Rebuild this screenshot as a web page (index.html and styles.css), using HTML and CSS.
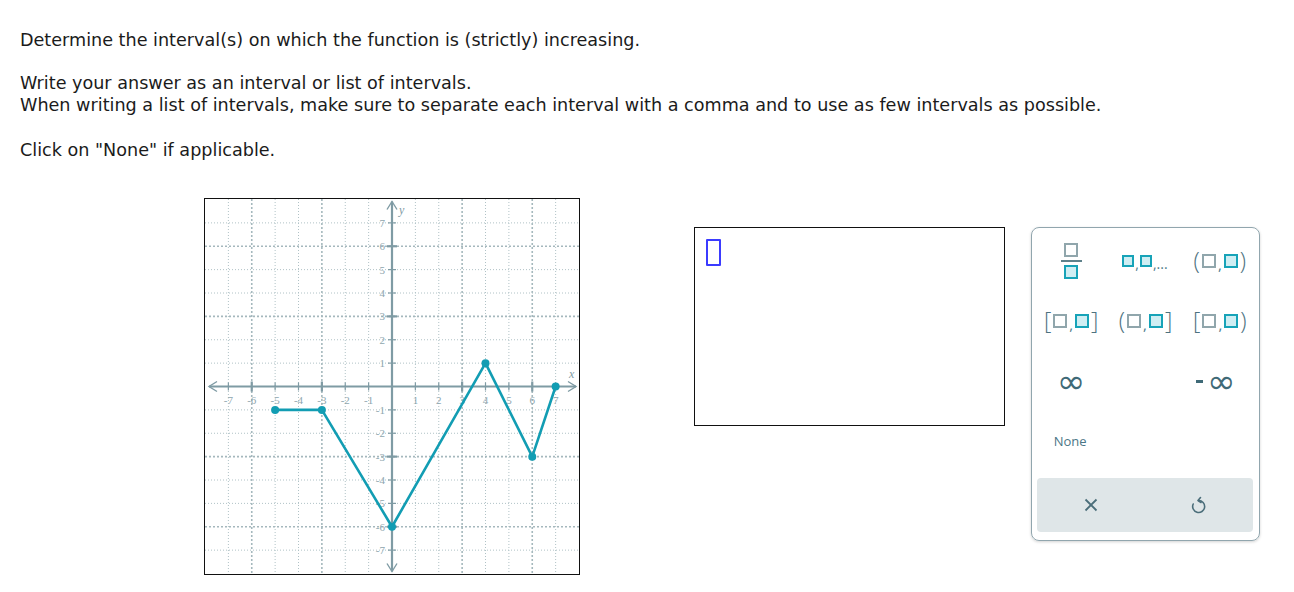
FILE: index.html
```html
<!DOCTYPE html>
<html>
<head>
<meta charset="utf-8">
<link rel="stylesheet" href="styles.css">
</head>
<body>
<div class="page">
  <p class="p1">Determine the interval(s) on which the function is (strictly) increasing.</p>
  <p class="p2">Write your answer as an interval or list of intervals.<br>When writing a list of intervals, make sure to separate each interval with a comma and to use as few intervals as possible.</p>
  <p class="p3">Click on "None" if applicable.</p>

  <div class="work">
    <div class="graph">
      <svg width="374" height="375" viewBox="0 0 374 375">
        <g transform="translate(187 187.5)">
          <g class="grid">
            <line x1="-163.625" y1="-187.5" x2="-163.625" y2="187.5"/>
            <line class="g3" x1="-140.25" y1="-187.5" x2="-140.25" y2="187.5"/>
            <line x1="-116.875" y1="-187.5" x2="-116.875" y2="187.5"/>
            <line x1="-93.5" y1="-187.5" x2="-93.5" y2="187.5"/>
            <line class="g3" x1="-70.125" y1="-187.5" x2="-70.125" y2="187.5"/>
            <line x1="-46.75" y1="-187.5" x2="-46.75" y2="187.5"/>
            <line x1="-23.375" y1="-187.5" x2="-23.375" y2="187.5"/>
            <line x1="23.375" y1="-187.5" x2="23.375" y2="187.5"/>
            <line x1="46.75" y1="-187.5" x2="46.75" y2="187.5"/>
            <line class="g3" x1="70.125" y1="-187.5" x2="70.125" y2="187.5"/>
            <line x1="93.5" y1="-187.5" x2="93.5" y2="187.5"/>
            <line x1="116.875" y1="-187.5" x2="116.875" y2="187.5"/>
            <line class="g3" x1="140.25" y1="-187.5" x2="140.25" y2="187.5"/>
            <line x1="163.625" y1="-187.5" x2="163.625" y2="187.5"/>

            <line y1="-163.625" x1="-187" y2="-163.625" x2="187"/>
            <line class="g3" y1="-140.25" x1="-187" y2="-140.25" x2="187"/>
            <line y1="-116.875" x1="-187" y2="-116.875" x2="187"/>
            <line y1="-93.5" x1="-187" y2="-93.5" x2="187"/>
            <line class="g3" y1="-70.125" x1="-187" y2="-70.125" x2="187"/>
            <line y1="-46.75" x1="-187" y2="-46.75" x2="187"/>
            <line y1="-23.375" x1="-187" y2="-23.375" x2="187"/>
            <line y1="23.375" x1="-187" y2="23.375" x2="187"/>
            <line y1="46.75" x1="-187" y2="46.75" x2="187"/>
            <line class="g3" y1="70.125" x1="-187" y2="70.125" x2="187"/>
            <line y1="93.5" x1="-187" y2="93.5" x2="187"/>
            <line y1="116.875" x1="-187" y2="116.875" x2="187"/>
            <line class="g3" y1="140.25" x1="-187" y2="140.25" x2="187"/>
            <line y1="163.625" x1="-187" y2="163.625" x2="187"/>
          </g>

          <g class="labels">
            <text x="-163.625" y="17">-7</text>
            <text x="-140.25" y="17">-6</text>
            <text x="-116.875" y="17">-5</text>
            <text x="-93.5" y="17">-4</text>
            <text x="-70.125" y="17">-3</text>
            <text x="-46.75" y="17">-2</text>
            <text x="-23.375" y="17">-1</text>
            <text x="23.375" y="17">1</text>
            <text x="46.75" y="17">2</text>
            <text x="70.125" y="17">3</text>
            <text x="93.5" y="17">4</text>
            <text x="116.875" y="17">5</text>
            <text x="140.25" y="17">6</text>
            <text x="163.625" y="17">7</text>
          </g>
          <g class="labels ylab">
            <text x="-7" y="-159.6">7</text>
            <text x="-7" y="-136.25">6</text>
            <text x="-7" y="-112.9">5</text>
            <text x="-7" y="-89.5">4</text>
            <text x="-7" y="-66.1">3</text>
            <text x="-7" y="-42.75">2</text>
            <text x="-7" y="-19.4">1</text>
            <text x="-7" y="27.4">-1</text>
            <text x="-7" y="50.75">-2</text>
            <text x="-7" y="74.1">-3</text>
            <text x="-7" y="97.5">-4</text>
            <text x="-7" y="120.9">-5</text>
            <text x="-7" y="144.25">-6</text>
            <text x="-7" y="167.6">-7</text>
          </g>

          <g class="axis">
            <line x1="-183" y1="0" x2="184" y2="0"/>
            <line x1="0" y1="-185" x2="0" y2="185"/>
            <polyline points="-175,-5 -183,0 -175,5"/>
            <polyline points="176,-5 184,0 176,5"/>
            <polyline points="-5,-177 0,-185 5,-177"/>
            <polyline points="-5,177 0,185 5,177"/>
          </g>
          <g class="ticks">
            <line x1="-163.625" y1="-4" x2="-163.625" y2="4"/>
            <line class="t3" x1="-140.25" y1="-5" x2="-140.25" y2="5"/>
            <line x1="-116.875" y1="-4" x2="-116.875" y2="4"/>
            <line x1="-93.5" y1="-4" x2="-93.5" y2="4"/>
            <line class="t3" x1="-70.125" y1="-5" x2="-70.125" y2="5"/>
            <line x1="-46.75" y1="-4" x2="-46.75" y2="4"/>
            <line x1="-23.375" y1="-4" x2="-23.375" y2="4"/>
            <line x1="23.375" y1="-4" x2="23.375" y2="4"/>
            <line x1="46.75" y1="-4" x2="46.75" y2="4"/>
            <line class="t3" x1="70.125" y1="-5" x2="70.125" y2="5"/>
            <line x1="93.5" y1="-4" x2="93.5" y2="4"/>
            <line x1="116.875" y1="-4" x2="116.875" y2="4"/>
            <line class="t3" x1="140.25" y1="-5" x2="140.25" y2="5"/>
            <line x1="163.625" y1="-4" x2="163.625" y2="4"/>

            <line y1="-163.625" x1="-4" y2="-163.625" x2="4"/>
            <line class="t3" y1="-140.25" x1="-5" y2="-140.25" x2="5"/>
            <line y1="-116.875" x1="-4" y2="-116.875" x2="4"/>
            <line y1="-93.5" x1="-4" y2="-93.5" x2="4"/>
            <line class="t3" y1="-70.125" x1="-5" y2="-70.125" x2="5"/>
            <line y1="-46.75" x1="-4" y2="-46.75" x2="4"/>
            <line y1="-23.375" x1="-4" y2="-23.375" x2="4"/>
            <line y1="23.375" x1="-4" y2="23.375" x2="4"/>
            <line y1="46.75" x1="-4" y2="46.75" x2="4"/>
            <line class="t3" y1="70.125" x1="-5" y2="70.125" x2="5"/>
            <line y1="93.5" x1="-4" y2="93.5" x2="4"/>
            <line y1="116.875" x1="-4" y2="116.875" x2="4"/>
            <line class="t3" y1="140.25" x1="-5" y2="140.25" x2="5"/>
            <line y1="163.625" x1="-4" y2="163.625" x2="4"/>
          </g>
          <text class="axname" x="177" y="-9">x</text>
          <text class="axname" x="7" y="-173">y</text>

          <polyline class="fn" points="-116.875,23.375 -70.125,23.375 0,140.25 93.5,-23.375 140.25,70.125 163.625,0"/>
          <g class="dots">
            <circle cx="-116.875" cy="23.375" r="4"/>
            <circle cx="-70.125" cy="23.375" r="4"/>
            <circle cx="0" cy="140.25" r="4"/>
            <circle cx="93.5" cy="-23.375" r="4"/>
            <circle cx="140.25" cy="70.125" r="4"/>
            <circle cx="163.625" cy="0" r="4"/>
          </g>
        </g>
      </svg>
    </div>

    <div class="answer">
      <span class="cursor"></span>
    </div>

    <div class="keypad">
      <div class="keys">
        <div class="key">
          <span class="frac"><span class="sq g"></span><span class="bar"></span><span class="sq t"></span></span>
        </div>
        <div class="key">
          <span class="list"><span class="sq t sm"></span><span class="cm">,</span><span class="sq t sm"></span><span class="cm">,...</span></span>
        </div>
        <div class="key">
          <span class="iv"><span class="br">(</span><span class="sq g"></span><span class="cm">,</span><span class="sq t"></span><span class="br">)</span></span>
        </div>
        <div class="key">
          <span class="iv"><span class="br">[</span><span class="sq g"></span><span class="cm">,</span><span class="sq t"></span><span class="br">]</span></span>
        </div>
        <div class="key">
          <span class="iv"><span class="br">(</span><span class="sq g"></span><span class="cm">,</span><span class="sq t"></span><span class="br">]</span></span>
        </div>
        <div class="key">
          <span class="iv"><span class="br">[</span><span class="sq g"></span><span class="cm">,</span><span class="sq t"></span><span class="br">)</span></span>
        </div>
        <div class="key"><span class="inf">∞</span></div>
        <div class="key"></div>
        <div class="key"><span class="inf ninf"><span class="minus"></span>∞</span></div>
        <div class="key"><span class="none">None</span></div>
      </div>
      <div class="actions">
        <div class="act">
          <svg width="14" height="14" viewBox="0 0 14 14"><path d="M1.5 1.5 L12.5 12.5 M12.5 1.5 L1.5 12.5" stroke="#4b6e7a" stroke-width="1.8" fill="none"/></svg>
        </div>
        <div class="act">
          <svg width="16" height="18" viewBox="0 0 16 18"><path d="M7.5 4.5 A6 6 0 1 1 2.2 8" stroke="#4b6e7a" stroke-width="1.6" fill="none" stroke-linecap="round"/><path d="M9.5 1.5 L7 4.5 L10 6.5" stroke="#4b6e7a" stroke-width="1.6" fill="none" stroke-linecap="round" stroke-linejoin="round"/></svg>
        </div>
      </div>
    </div>
  </div>
</div>
</body>
</html>
```

FILE: styles.css
```css
* { box-sizing: border-box; }
html, body { margin: 0; padding: 0; background: #fff; }
body {
  font-family: "DejaVu Sans", Verdana, sans-serif;
  font-size: 17.6px;
  color: #1b1b1b;
}
.page { padding: 29px 0 0 20px; }
p { margin: 0; line-height: 22px; }
.p2 { margin-top: 21px; }
.p3 { margin-top: 23px; }

.work {
  display: flex;
  align-items: flex-start;
  margin-top: 37px;
  margin-left: 184px;
}
.graph {
  width: 376px;
  height: 377px;
  border: 1px solid #111;
  background: #fff;
}
.graph svg { display: block; }
.grid line { stroke: #b0c2c6; stroke-width: 1; stroke-dasharray: 1 2; }
.grid line.g3 { stroke: #a5b8bd; stroke-width: 1.6; stroke-dasharray: 2 2; }
.labels text {
  font-family: "Liberation Serif", "DejaVu Serif", serif;
  font-size: 11px;
  fill: #8ea6ae;
  text-anchor: middle;
}
.ylab text { text-anchor: end; }
.axis line, .axis polyline { stroke: #7f9ba4; stroke-width: 2.2; fill: none; }
.axis polyline { stroke-width: 1.4; }
.ticks line { stroke: #7f9ba4; stroke-width: 1.2; }
.ticks line.t3 { stroke-width: 2.2; }
.axname {
  font-family: "Liberation Serif", serif;
  font-style: italic;
  font-size: 12px;
  fill: #7f9ba4;
}
.fn { fill: none; stroke: #129db3; stroke-width: 2.6; stroke-linejoin: round; }
.dots circle { fill: #129db3; }

.answer {
  width: 311px;
  height: 199px;
  margin-top: 29px;
  margin-left: 114px;
  border: 1px solid #111;
  padding: 11px 0 0 11px;
}
.cursor {
  display: block;
  width: 15px;
  height: 27px;
  border: 2px solid #3b3bff;
  border-radius: 1px;
}

.keypad {
  width: 229px;
  height: 314px;
  margin-top: 29px;
  margin-left: 26px;
  border: 1px solid #91a6ae;
  border-radius: 8px;
  box-shadow: 0 1px 3px rgba(0,0,0,0.18);
  padding: 3px 2px 0 2px;
  font-family: "Open Sans", "Liberation Sans", sans-serif;
}
.keys {
  display: grid;
  grid-template-columns: repeat(3, 1fr);
  grid-auto-rows: 60px;
}
.key {
  display: flex;
  align-items: center;
  justify-content: center;
}
.sq {
  display: inline-block;
  width: 14px;
  height: 14px;
  border: 2px solid #90a6ac;
  background: #fff;
}
.sq.t { border-color: #17a3b8; background: #cfeef3; }
.sq.sm { width: 12px; height: 12px; }
.frac {
  display: flex;
  flex-direction: column;
  align-items: center;
  gap: 3px;
}
.bar { width: 21px; height: 2px; background: #5f818b; }
.list, .iv { display: flex; align-items: center; }
.list .cm { color: #4f7c88; font-size: 14px; line-height: 14px; margin: 6px 1px 0 1px; }
.list { margin-left: 0; }
.iv .cm { color: #4f7c88; font-size: 15px; margin: 6px 2px 0 2px; line-height: 14px; }
.br {
  font-size: 23px;
  line-height: 26px;
  font-weight: 300;
  color: #4d7280;
  margin: -3px 2px 0 2px;
}
.inf {
  font-family: "DejaVu Sans", sans-serif;
  font-size: 34px;
  color: #3f6a77;
  line-height: 30px;
  display: flex;
  align-items: center;
}
.ninf { margin-left: -8px; }
.minus {
  display: inline-block;
  width: 7px;
  height: 3px;
  background: #3f6a77;
  margin-right: 4px;
}
.none { font-size: 13px; color: #4b7686; margin-left: -2px; }

.actions {
  display: flex;
  margin: 7px 4px 0 3px;
  height: 54px;
  background: #dfe6e8;
  border-radius: 4px;
}
.act {
  flex: 1;
  display: flex;
  align-items: center;
  justify-content: center;
}
.act svg { display: block; }
```
